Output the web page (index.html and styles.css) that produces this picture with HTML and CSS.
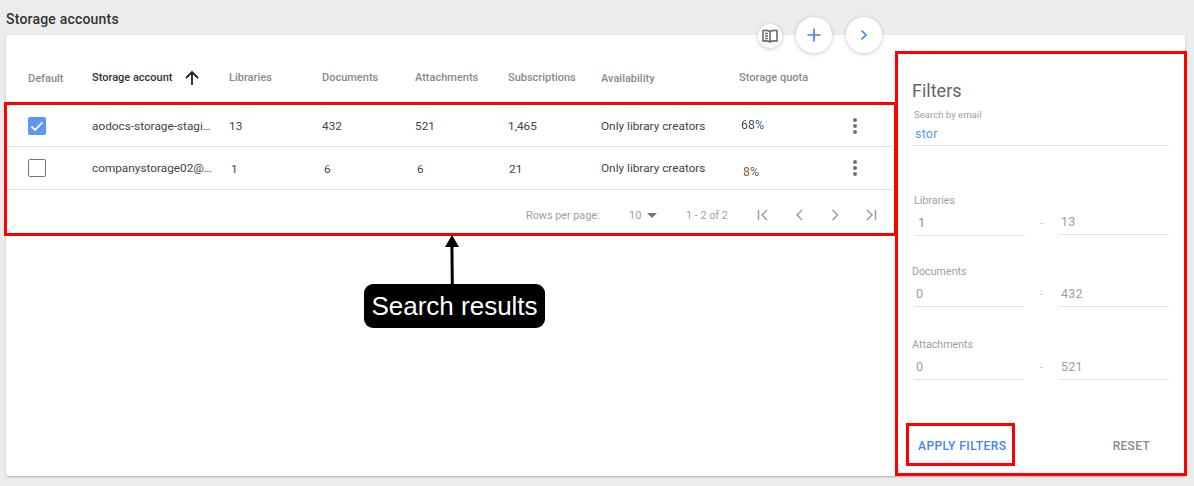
FILE: index.html
```html
<!DOCTYPE html>
<html lang="en">
<head>
<meta charset="utf-8">
<title>Storage accounts</title>
<link rel="stylesheet" href="styles.css">
</head>
<body>
<h1 class="page-title">Storage accounts</h1>
<main class="card">
  <section class="results">
    <div class="row head">
      <span class="th th-default">Default</span>
      <span class="th sorted">Storage account
        <svg class="sort" width="16" height="16" viewBox="0 0 16 16"><path d="M8 15V2M2 8l6-6 6 6" fill="none" stroke="#222" stroke-width="1.8"/></svg>
      </span>
      <span class="th">Libraries</span>
      <span class="th">Documents</span>
      <span class="th">Attachments</span>
      <span class="th">Subscriptions</span>
      <span class="th th-default">Availability</span>
      <span class="th">Storage quota</span>
      <span></span>
    </div>
    <div class="row body first">
      <span class="check on"><svg width="18" height="18" viewBox="0 0 18 18"><path d="M3.500 9.500l3.600 3.400 7.400-7.600" fill="none" stroke="#fff" stroke-width="1.8"/></svg></span>
      <span>aodocs-storage-stagi…</span>
      <span>13</span>
      <span>432</span>
      <span>521</span>
      <span>1,465</span>
      <span>Only library creators</span>
      <span class="quota q1">68%</span>
      <span class="dots"><i></i><i></i><i></i></span>
    </div>
    <div class="row body">
      <span class="check"></span>
      <span>companystorage02@…</span>
      <span class="n2">1</span>
      <span class="n2">6</span>
      <span class="n2">6</span>
      <span class="n3">21</span>
      <span>Only library creators</span>
      <span class="quota q2">8%</span>
      <span class="dots"><i></i><i></i><i></i></span>
    </div>
    <div class="pager">
      <span class="rows-label">Rows per page:</span>
      <span class="rows-value">10</span>
      <svg class="caret" width="10" height="5" viewBox="0 0 10 5"><path d="M0 0h10L5 5z" fill="#757575"/></svg>
      <span class="range">1 - 2 of 2</span>
      <span class="pager-icons">
        <svg width="14" height="14" viewBox="0 0 14 14"><path d="M2.500 2v10M11 2L6 7l5 5" fill="none" stroke="#9e9e9e" stroke-width="1.5"/></svg>
        <svg width="14" height="14" viewBox="0 0 14 14"><path d="M10 2L5 7l5 5" fill="none" stroke="#9e9e9e" stroke-width="1.5"/></svg>
        <svg width="14" height="14" viewBox="0 0 14 14"><path d="M4.500 2l5 5-5 5" fill="none" stroke="#9e9e9e" stroke-width="1.5"/></svg>
        <svg width="14" height="14" viewBox="0 0 14 14"><path d="M11.500 2v10M3 2l5 5-5 5" fill="none" stroke="#9e9e9e" stroke-width="1.5"/></svg>
      </span>
    </div>
  </section>
  <aside class="filters">
    <h2 class="filters-title">Filters</h2>
    <div class="field email">
      <label class="label">Search by email</label>
      <div class="value active">stor</div>
    </div>
    <div class="group libraries">
      <label class="label">Libraries</label>
      <div class="range-row">
        <div class="value active shifted">1</div><span class="dash">-</span><div class="value short">13</div>
      </div>
    </div>
    <div class="group documents">
      <label class="label">Documents</label>
      <div class="range-row">
        <div class="value">0</div><span class="dash">-</span><div class="value">432</div>
      </div>
    </div>
    <div class="group">
      <label class="label">Attachments</label>
      <div class="range-row">
        <div class="value">0</div><span class="dash">-</span><div class="value">521</div>
      </div>
    </div>
    <div class="actions">
      <button class="btn apply">APPLY FILTERS</button>
      <button class="btn reset">RESET</button>
    </div>
  </aside>
</main>

<div class="fabs">
  <span class="fab small"><svg width="18" height="18" viewBox="0 0 18 18"><path d="M9 4.500C7.500 3.500 5 3.200 2 3.500v10.500c3-.3 5.500 0 7 1 1.500-1 4-1.300 7-1V3.500c-3-.3-5.500 0-7 1zM9 4.500V15M4 6.500h3M4 9h3M4 11.500h3" fill="none" stroke="#6e6e6e" stroke-width="1.6"/></svg></span>
  <span class="fab"><svg width="14" height="14" viewBox="0 0 14 14"><path d="M7 .5v13M.5 7h13" stroke="#4285f4" stroke-width="1.700" fill="none"/></svg></span>
  <span class="fab"><svg width="10" height="12" viewBox="0 0 10 12"><path d="M2.500 1.500L7 6l-4.500 4.500" stroke="#4285f4" stroke-width="1.700" fill="none"/></svg></span>
</div>

<div class="mark mark-results"></div>
<div class="mark mark-filters"></div>
<div class="mark mark-apply"></div>

<svg class="arrow" width="16" height="50" viewBox="0 0 16 50"><path d="M8.300 49L7.900 10" stroke="#000" stroke-width="3" fill="none"/><path d="M8 0l7 12H1z" fill="#000"/></svg>
<div class="callout">Search results</div>
</body>
</html>
```

FILE: styles.css
```css
* { box-sizing: border-box; }
html, body { margin: 0; height: 486px; overflow: hidden; }
body {
  background: #ececec;
  font-family: Roboto, "Noto Sans", sans-serif;
  color: #424242;
  position: relative;
}
.page-title {
  margin: 0;
  height: 35px;
  padding: 11px 0 0 6px;
  font-size: 14px;
  line-height: 17px;
  font-weight: 500;
  letter-spacing: .2px;
  color: #333;
}
.card {
  margin-left: 6px;
  width: 1179px;
  height: 441px;
  background: #fff;
  border-radius: 2px;
  box-shadow: 0 1px 2px rgba(0,0,0,.25);
  display: flex;
}
.results { width: 889px; flex: none; }
.row {
  display: grid;
  grid-template-columns: 64px 137px 93px 93px 93px 93px 138px 100px 32px;
  align-items: center;
  padding-left: 22px;
  font-size: 11.8px;
}
.head { height: 67px; padding-top: 18px; }
.th { font-size: 11px; font-weight: 500; color: #8a8a8a; display: flex; align-items: center; }
.th-default { padding-top: 1px; }
.sorted { color: #333; }
.sort { margin-left: 12px; }
.body { height: 43px; border-bottom: 1px solid #e3e3e3; color: #444; }
.body.first { height: 45px; padding-top: 3px; }
.check {
  width: 18px; height: 18px;
  border: 1px solid #757575;
  border-radius: 2px;
  display: block;
}
.check.on { background: #5c97f7; border: 0; }
.check svg { display: block; }
.n2 { padding: 1px 0 0 2px; }
.n3 { padding: 1px 0 0 1px; }
.quota {
  font-size: 12.5px;
  -webkit-background-clip: text;
  background-clip: text;
  color: transparent;
}
.q1 { padding: 0 0 2px 2px; background-image: linear-gradient(90deg, #4a3f5a 9px, #3a4f78 11px, #4a6a98); }
.q2 { padding: 6px 0 0 4px; background-image: linear-gradient(90deg, #8a6530 12px, #505050 14px, #4a6a98 24px); }
.dots { display: flex; flex-direction: column; gap: 2px; align-items: center; width: 4px; margin-left: 14px; }
.dots i { width: 4px; height: 4px; border-radius: 50%; background: #757575; }
.pager {
  height: 50px;
  display: flex;
  align-items: center;
  font-size: 10.8px;
  color: #9e9e9e;
  padding-left: 520px;
}
.rows-label { width: 103px; }
.rows-value { width: 18px; font-size: 11px; }
.caret { margin-right: 29px; }
.range { width: 70px; color: #9e9e9e; }
.pager-icons { display: flex; gap: 22px; }
.filters {
  flex: 1;
  padding: 45px 16px 0 17px;
  display: flex;
  flex-direction: column;
}
.filters-title { margin: 0; font-size: 18px; line-height: 22px; font-weight: 400; color: #666; }
.label { display: block; font-size: 10.7px; line-height: 12px; color: #9e9e9e; }
.field.email { margin-top: 7px; }
.email .label { font-size: 9.6px; padding-left: 2px; }
.value {
  font-size: 12.5px;
  line-height: 16px;
  padding: 7px 0 3px 2px;
  height: 28px;
  width: 110px;
  flex: none;
  color: #9e9e9e;
  border-bottom: 1px solid #e3e3e3;
  letter-spacing: .2px;
}
.email .value { width: auto; height: 25px; padding: 5px 0 0 3px; }
.active { color: #5b95f7; }
.group { margin-top: 31px; height: 42px; }
.group.libraries { margin-top: 49px; }
.group.documents { margin-top: 29px; }
.libraries .label { padding-left: 2px; }
.range-row { display: flex; align-items: flex-start; padding-left: 2px; margin-top: 1px; }
.shifted { width: 109px; margin-left: 2px; }
.short { height: 27px; padding-top: 6px; }
.dash { flex: 1; text-align: center; color: #cfcfcf; font-size: 12px; padding-top: 8px; }
.actions { margin-top: auto; display: flex; justify-content: space-between; height: 61px; padding: 21px 19px 0 6px; }
.btn {
  background: none; border: 0; padding: 0; height: 20px;
  font: 500 12px/20px Roboto, sans-serif;
  letter-spacing: .45px;
}
.apply { color: #4285f4; }
.reset { color: #8a8a8a; letter-spacing: .3px; }

.fabs { position: absolute; left: 758px; top: 17px; display: flex; align-items: center; gap: 14px; }
.fab {
  width: 36px; height: 36px; border-radius: 50%;
  background: #fff;
  box-shadow: 0 1px 4px rgba(0,0,0,.22);
  display: flex; align-items: center; justify-content: center;
}
.fab.small { width: 24px; height: 24px; margin-top: 2px; }
.mark { position: absolute; border: 3px solid #f00; pointer-events: none; }
.mark-results { left: 4px; top: 102px; width: 893px; height: 134px; }
.mark-filters { left: 895px; top: 51px; width: 292px; height: 425px; }
.mark-apply { left: 906px; top: 423px; width: 109px; height: 43px; }
.arrow { position: absolute; left: 444px; top: 235px; }
.callout {
  position: absolute;
  left: 364px; top: 284px;
  width: 181px; height: 44px;
  background: #000;
  color: #fff;
  border-radius: 9px;
  font-family: "Liberation Sans", Arial, sans-serif;
  font-size: 26px;
  line-height: 44px;
  text-align: center;
}
```
